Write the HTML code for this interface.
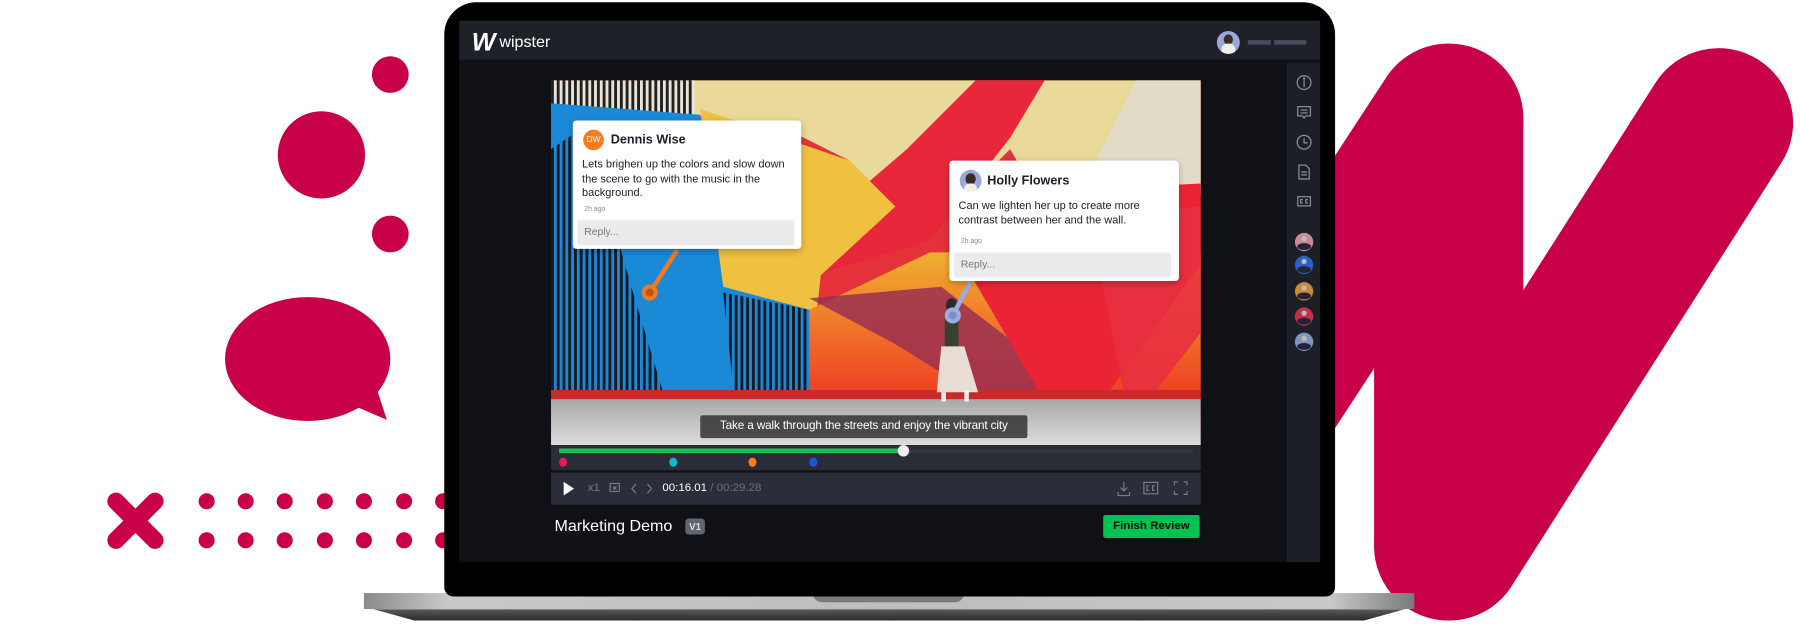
<!DOCTYPE html>
<html><head><meta charset="utf-8">
<style>
*{margin:0;padding:0;box-sizing:border-box}
html,body{width:1800px;height:624px;overflow:hidden;background:#fff;font-family:"Liberation Sans",sans-serif}
#w{position:absolute;left:0;top:0;width:1568px;height:544px;transform:scale(1.14796,1.14706);transform-origin:0 0}
.a{position:absolute}
.card{position:absolute;background:#fff;border-radius:3px;box-shadow:0 2px 6px rgba(0,0,0,.25)}
.name{position:absolute;font-size:11px;font-weight:bold;color:#1b1d2a}
.txt{position:absolute;font-size:9.6px;line-height:12.5px;color:#1b1d2a}
.ago{position:absolute;font-size:6px;color:#888}
.rep{position:absolute;background:#ebebed;border-radius:2px;font-size:9px;color:#777;padding:5px 6px}
</style></head><body>
<div id="w">
<svg class="a" style="left:0;top:0" width="1568" height="544">
 <g fill="#c8004a">
  <circle cx="340" cy="65" r="16"/><circle cx="280" cy="135" r="38"/><circle cx="340" cy="204" r="16"/>
  <ellipse cx="268" cy="313" rx="72" ry="54"/><path d="M300 350 L337 366 L322 320 Z"/>
  <circle cx="180" cy="437" r="7"/><circle cx="214" cy="437" r="7"/><circle cx="248" cy="437" r="7"/><circle cx="283" cy="437" r="7"/><circle cx="317" cy="437" r="7"/><circle cx="352" cy="437" r="7"/><circle cx="386" cy="437" r="7"/>
  <circle cx="180" cy="471" r="7"/><circle cx="214" cy="471" r="7"/><circle cx="248" cy="471" r="7"/><circle cx="283" cy="471" r="7"/><circle cx="317" cy="471" r="7"/><circle cx="352" cy="471" r="7"/><circle cx="386" cy="471" r="7"/>
 </g>
 <g stroke="#c8004a" stroke-width="15" stroke-linecap="round"><line x1="101" y1="437" x2="135" y2="471"/><line x1="135" y1="437" x2="101" y2="471"/></g>
 <g stroke="#c8004a" stroke-width="130" stroke-linecap="round" fill="none">
  <line x1="1262" y1="103" x2="1262" y2="476"/><line x1="1497" y1="107" x2="1262" y2="476"/><line x1="1262" y1="103" x2="1090" y2="366"/>
 </g>
</svg>
<div class="a" style="left:317px;top:517px;width:915px;height:14px;background:linear-gradient(90deg,#8a8a8a,#c9c9c9 8%,#bdbdbd 50%,#c9c9c9 92%,#7a7a7a)"></div>
<div class="a" style="left:325px;top:531px;width:899px;height:10px;background:linear-gradient(#5a5a5a,#2a2a2a);clip-path:polygon(0 0,100% 0,96% 100%,4% 100%)"></div>
<div class="a" style="left:708px;top:517px;width:132px;height:8px;background:#7a7a7a;border-radius:0 0 8px 8px"></div>
<div class="a" style="left:387px;top:2px;width:776px;height:518px;background:#000;border-radius:28px 28px 8px 8px"></div>
<div class="a" style="left:400px;top:18px;width:750px;height:472px;background:#101116"></div>
<div class="a" style="left:400px;top:18px;width:750px;height:34px;background:#1f2129"></div>
<div class="a" style="left:411px;top:24px;color:#fff;font-size:22px;font-weight:bold;font-style:italic;letter-spacing:-2px">W</div>
<div class="a" style="left:435px;top:28px;color:#fff;font-size:14px">wipster</div>
<div class="a" style="left:1060px;top:27px;width:20px;height:20px;border-radius:50%;background:#9aa7d8;overflow:hidden"><div style="position:absolute;left:6px;top:3px;width:8px;height:9px;border-radius:50%;background:#3a2a22"></div><div style="position:absolute;left:4px;top:11px;width:12px;height:10px;border-radius:5px 5px 0 0;background:#f2efe9"></div></div>
<div class="a" style="left:1087px;top:35px;width:20px;height:4px;background:#4a4b5e"></div>
<div class="a" style="left:1110px;top:35px;width:28px;height:4px;background:#4a4b5e"></div>
<div class="a" style="left:1121px;top:55px;width:29px;height:435px;background:#1d1f27"></div>
<svg class="a" style="left:1121px;top:55px" width="29" height="260" fill="none" stroke="#8a8c96" stroke-width="1.1">
 <circle cx="15" cy="17" r="6"/><line x1="15" y1="15" x2="15" y2="21"/><circle cx="15" cy="13.5" r=".5" fill="#8a8c96"/>
 <path d="M9.5 38h11v8h-4l-1.5 2-1.5-2h-4z"/><line x1="12" y1="41" x2="18" y2="41"/><line x1="12" y1="43.5" x2="18" y2="43.5"/>
 <circle cx="15" cy="69" r="6"/><path d="M15 65.5v4h3"/>
 <path d="M10.5 89h6l3 3v9h-9z"/><line x1="12.5" y1="95" x2="17.5" y2="95"/><line x1="12.5" y1="97.5" x2="17.5" y2="97.5"/>
 <rect x="9.5" y="116.5" width="11" height="8"/><path d="M14 119h-2v3h2M18.5 119h-2v3h2"/>
</svg>
<svg class="a" style="left:1127px;top:201px" width="18" height="108">
 <g><circle cx="9" cy="10" r="8" fill="#c98a9a"/><circle cx="9" cy="30" r="8" fill="#2c5fc8"/><circle cx="9" cy="53" r="8" fill="#c98a3a"/><circle cx="9" cy="75" r="8" fill="#c23048"/><circle cx="9" cy="97" r="8" fill="#8295c0"/></g>
 <g fill="#bbb"><circle cx="9" cy="7" r="2.3"/><circle cx="9" cy="27" r="2.3"/><circle cx="9" cy="50" r="2.3"/><circle cx="9" cy="72" r="2.3"/><circle cx="9" cy="94" r="2.3"/></g>
 <g fill="#25233a"><ellipse cx="9" cy="14" rx="6" ry="3"/><ellipse cx="9" cy="34" rx="6" ry="3"/><ellipse cx="9" cy="57" rx="6" ry="3"/><ellipse cx="9" cy="79" rx="6" ry="3"/><ellipse cx="9" cy="101" rx="6" ry="3"/></g>
</svg>
<svg class="a" style="left:480px;top:70px" width="566" height="318">
 <defs>
  <linearGradient id="og" x1="0" y1="0" x2="0" y2="1"><stop offset="0" stop-color="#f0b030"/><stop offset="1" stop-color="#ee3a22"/></linearGradient>
  <linearGradient id="sw" x1="0" y1="0" x2="0" y2="1"><stop offset="0" stop-color="#a8a8a8"/><stop offset="1" stop-color="#dcdcdc"/></linearGradient>
  <pattern id="st" width="5" height="10" patternUnits="userSpaceOnUse"><rect width="2.5" height="10" fill="#141820"/></pattern>
  <pattern id="st2" width="5" height="10" patternUnits="userSpaceOnUse"><rect width="5" height="10" fill="#e8e4d8"/><rect width="2.5" height="10" fill="#202020"/></pattern>
 </defs>
 <rect width="566" height="318" fill="#e5323a"/>
 <polygon points="120,0 566,0 566,95 520,115 470,70 420,95 400,60 330,130 300,110 260,70 200,40 120,30" fill="#e9d99a"/>
 <polygon points="370,0 430,0 400,50 330,140 230,170 240,120 310,60" fill="#e8283a"/>
 <polygon points="510,0 566,0 566,100 520,110 470,80" fill="#e2dcc8"/>
 <polygon points="130,25 260,70 300,110 235,170 225,260 150,200" fill="#f0c040"/>
 <polygon points="0,0 125,0 125,30 0,30" fill="url(#st2)"/>
 <polygon points="0,20 130,30 150,180 225,200 225,280 0,280" fill="#1a8ad8"/>
 <polygon points="0,60 30,40 70,180 100,280 0,280" fill="url(#st)"/>
 <polygon points="150,185 225,200 225,280 160,280" fill="url(#st)"/>
 <polygon points="225,200 330,150 470,150 566,150 566,280 225,280" fill="url(#og)"/>
 <polygon points="225,190 340,180 470,280 380,280 300,230" fill="#9a3050" opacity=".85"/>
 <polygon points="380,70 470,95 566,90 566,160 480,280 430,280 360,160" fill="#ea2434"/>
 <polygon points="470,120 566,110 566,220 520,280 500,280" fill="#e83040" opacity=".9"/>
 <rect x="0" y="270" width="566" height="10" fill="#c82a2a"/>
 <rect x="0" y="278" width="566" height="40" fill="url(#sw)"/>
 <g fill="#2a2a2a"><ellipse cx="349" cy="196" rx="5" ry="6"/><rect x="343" y="206" width="12" height="30" rx="4" fill="#3a4030"/></g>
 <polygon points="340,232 360,232 372,272 336,272" fill="#e8ddd5"/>
 <rect x="340" y="272" width="4" height="8" fill="#eee"/><rect x="360" y="270" width="4" height="10" fill="#eee"/>
</svg>
<svg class="a" style="left:480px;top:70px" width="566" height="318">
 <line x1="110" y1="148" x2="86" y2="185" stroke="#f07a20" stroke-width="4"/>
 <circle cx="86" cy="185" r="7" fill="#f07a20"/><circle cx="86" cy="185" r="3.5" fill="#c05010"/>
 <line x1="365" y1="176" x2="350" y2="205" stroke="#9aaee0" stroke-width="4"/>
 <circle cx="350" cy="205" r="7" fill="#9aaee0"/><circle cx="350" cy="205" r="3.5" fill="#7a8ec8"/>
</svg>
<div class="card" style="left:499px;top:105px;width:199px;height:112px">
 <div class="a" style="left:9px;top:8px;width:18px;height:18px;border-radius:50%;background:#f47b20;color:#fff;font-size:7.5px;line-height:18px;text-align:center">DW</div>
 <div class="name" style="left:33px;top:11px">Dennis Wise</div>
 <div class="txt" style="left:8px;top:33px;width:188px">Lets brighen up the colors and slow down the scene to go with the music in the background.</div>
 <div class="ago" style="left:10px;top:75px">2h ago</div>
 <div class="rep" style="left:4px;top:87px;width:189px;height:22px">Reply...</div>
</div>
<div class="card" style="left:827px;top:140px;width:200px;height:105px">
 <div class="a" style="left:9px;top:8px;width:19px;height:19px;border-radius:50%;background:#9aa7d8;overflow:hidden"><div style="position:absolute;left:5px;top:3px;width:9px;height:10px;border-radius:50%;background:#3a2a22"></div><div style="position:absolute;left:4px;top:12px;width:11px;height:8px;background:#f2efe9;border-radius:4px 4px 0 0"></div></div>
 <div class="name" style="left:33px;top:12px">Holly Flowers</div>
 <div class="txt" style="left:8px;top:34px;width:190px">Can we lighten her up to create more contrast between her and the wall.</div>
 <div class="ago" style="left:10px;top:68px">2h ago</div>
 <div class="rep" style="left:4px;top:80px;width:189px;height:22px">Reply...</div>
</div>
<div class="a" style="left:610px;top:362px;width:285px;height:20px;background:rgba(55,55,55,.88);border-radius:2px;color:#fff;font-size:10.2px;line-height:20px;text-align:center;white-space:nowrap;letter-spacing:-.1px">Take a walk through the streets and enjoy the vibrant city</div>
<div class="a" style="left:480px;top:388px;width:566px;height:22px;background:#2a2d36"></div>
<div class="a" style="left:487px;top:392px;width:552px;height:3px;background:#353842"></div>
<div class="a" style="left:487px;top:391px;width:300px;height:4px;background:#18c050"></div>
<div class="a" style="left:782px;top:388px;width:10px;height:10px;border-radius:50%;background:#eee"></div>
<div class="a" style="left:487px;top:399px;width:7px;height:8px;border-radius:50%;background:#e8185a"></div>
<div class="a" style="left:583px;top:399px;width:7px;height:8px;border-radius:50%;background:#1ab5c8"></div>
<div class="a" style="left:652px;top:399px;width:7px;height:8px;border-radius:50%;background:#f57c1f"></div>
<div class="a" style="left:705px;top:399px;width:7px;height:8px;border-radius:50%;background:#1a55e0"></div>
<div class="a" style="left:480px;top:412px;width:566px;height:28px;background:#2b2e38"></div>
<svg class="a" style="left:480px;top:412px" width="566" height="28" fill="none" stroke="#7a7d88" stroke-width="1">
 <path d="M11 8l9 6-9 6z" fill="#fff" stroke="none"/>
 <rect x="51.5" y="9.5" width="8" height="7"/><path d="M54 12l3 3M57 12l-3 3"/>
 <path d="M74 10l-3.5 4 3.5 4M84 10l3.5 4-3.5 4"/>
 <path d="M499 8v8M496 13l3 3 3-3M494 17v3h10v-3"/>
 <rect x="516.5" y="8.5" width="12" height="10"/><path d="M521 11.5h-2v4h2M526 11.5h-2v4h2"/>
 <path d="M543 11V8h3M551 8h3v3M554 16v3h-3M546 19h-3v-3"/>
</svg>
<div class="a" style="left:512px;top:420px;color:#7a7d88;font-size:10px">x1</div>
<div class="a" style="left:577px;top:420px;color:#fff;font-size:10px">00:16.01 <span style="color:#6c6f7a">/ 00:29.28</span></div>
<div class="a" style="left:483px;top:450px;color:#fff;font-size:14px">Marketing Demo</div>
<div class="a" style="left:597px;top:452px;width:17px;height:14px;background:#62656f;border-radius:3px;color:#ddd;font-size:8.5px;font-weight:bold;line-height:14px;text-align:center">V1</div>
<div class="a" style="left:961px;top:449px;width:84px;height:20px;background:#00c250;border-radius:2px;color:#0b0b0b;font-size:10px;font-weight:bold;line-height:20px;text-align:center">Finish Review</div>
</div>
</body></html>
